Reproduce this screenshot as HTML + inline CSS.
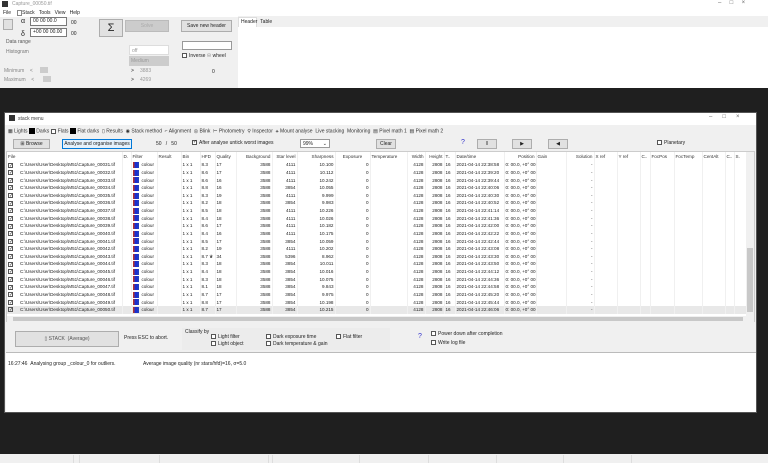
<!DOCTYPE html>
<html><head><meta charset="utf-8"><style>
*{box-sizing:border-box;margin:0;padding:0}
body{width:768px;height:463px;overflow:hidden;background:#1f1f1f;font-family:"Liberation Sans",sans-serif;font-size:5px;color:#222;position:relative}
.a{position:absolute;white-space:nowrap}
.btn{position:absolute;background:#e1e1e1;border:1px solid #adadad;text-align:center;font-size:5px}
.cb{display:inline-block;width:5px;height:5px;border:1px solid #555;background:#fff;vertical-align:middle;margin-right:2px}
.inp{position:absolute;background:#fff;border:1px solid #7a7a7a;font-size:5px;padding-left:2px}
table{border-collapse:collapse;table-layout:fixed;position:absolute;left:7px;top:152px;width:739px}
td{height:7.63px;font-size:4.6px;line-height:7px;white-space:nowrap;overflow:visible;padding:0 1px;border-right:1px solid #f0f0f0}
tr.h td{height:9px;color:#333}
.r{text-align:right}.c{text-align:center}
.sw{display:inline-block;width:6px;height:6px;background:linear-gradient(90deg,#b03030 0 25%,#1a2fd0 25% 75%,#2040c0 75%);vertical-align:middle;margin-right:3px}
.ck{display:inline-block;width:5px;height:5px;border:1px solid #555;font-size:5px;line-height:4px;text-align:center;margin-right:7px;vertical-align:middle}
</style></head><body>
<!-- top app -->
<div class="a" style="left:0;top:0;width:768px;height:88px;background:#fff"></div>
<div class="a" style="left:2px;top:1px;width:6px;height:6px;background:#333"></div>
<div class="a" style="left:12px;top:1px;color:#999">Capture_00050.tif</div>
<div class="a" style="left:718px;top:0;color:#666;font-size:6px">–&nbsp;&nbsp;&nbsp;&nbsp;&nbsp;□&nbsp;&nbsp;&nbsp;&nbsp;&nbsp;×</div>
<div class="a" style="left:3px;top:10px">File &nbsp;&nbsp;&nbsp;&nbsp;&nbsp;&nbsp;&nbsp;Stack &nbsp;&nbsp;Tools &nbsp;&nbsp;View &nbsp;&nbsp;Help</div>
<div class="a" style="left:17px;top:10px;width:5px;height:6px;border:1px solid #888"></div>
<div class="a" style="left:0;top:17px;width:238px;height:71px;background:#f0f0f0"></div>
<div class="a" style="left:238px;top:16px;width:530px;height:11px;background:#f0f0f0"></div>
<div class="a" style="left:238px;top:17px;width:19px;height:10px;background:#fff;border:1px solid #ddd;border-bottom:none"></div>
<div class="a" style="left:241px;top:19px">Header &nbsp;Table</div>
<div class="btn" style="left:3px;top:19px;width:10px;height:11px"></div>
<div class="a" style="left:21px;top:18px;font-size:7px">α</div>
<div class="a" style="left:21px;top:31px;font-size:7px">δ</div>
<div class="inp" style="left:30px;top:17px;width:37px;height:9px;line-height:7px">00 00 00.0</div>
<div class="inp" style="left:30px;top:28px;width:37px;height:9px;line-height:7px">+00 00 00.00</div>
<div class="a" style="left:71px;top:20px">00</div><div class="a" style="left:71px;top:31px">00</div>
<div class="btn" style="left:99px;top:19px;width:24px;height:18px;font-size:11px;line-height:16px">Σ</div>
<div class="btn" style="left:125px;top:20px;width:44px;height:12px;line-height:10px;color:#aaa;background:#ccc;border-color:#bbb">Solve</div>
<div class="btn" style="left:181px;top:20px;width:51px;height:12px;line-height:10px">Save new header</div>
<div class="a" style="left:6px;top:39px;color:#555">Data range</div>
<div class="a" style="left:6px;top:49px;color:#777">Histogram</div>
<div class="a" style="left:129px;top:45px;width:40px;height:10px;background:#fff;border:1px solid #ddd;color:#999;padding:2px">off</div>
<div class="a" style="left:129px;top:56px;width:40px;height:10px;background:#ccc;color:#999;padding:2px">Medium</div>
<div class="a" style="left:182px;top:41px;width:50px;height:9px;background:#fff;border:1px solid #999"></div>
<div class="a" style="left:182px;top:53px"><span class="cb"></span>Inverse ☉ wheel</div>
<div class="a" style="left:4px;top:68px;color:#888">Minimum &nbsp;&nbsp;&nbsp;&lt;</div>
<div class="a" style="left:4px;top:77px;color:#888">Maximum &nbsp;&nbsp;&nbsp;&lt;</div>
<div class="a" style="left:40px;top:67px;width:8px;height:6px;background:#ccc"></div>
<div class="a" style="left:43px;top:76px;width:8px;height:6px;background:#ccc"></div>
<div class="a" style="left:131px;top:68px">&gt;</div><div class="a" style="left:131px;top:77px">&gt;</div>
<div class="a" style="left:140px;top:68px;color:#999">3883</div><div class="a" style="left:140px;top:77px;color:#999">4269</div>
<div class="a" style="left:212px;top:69px">0</div>
<!-- stack window -->
<div class="a" style="left:4px;top:112px;width:753px;height:301px;background:#f0f0f0;border:1px solid #555"></div>
<div class="a" style="left:5px;top:113px;width:751px;height:12px;background:#fff"></div>
<div class="a" style="left:9px;top:115px;width:6px;height:6px;background:#333"></div>
<div class="a" style="left:18px;top:116px;color:#444">stack menu</div>
<div class="a" style="left:709px;top:114px;color:#666;font-size:6px">–&nbsp;&nbsp;&nbsp;&nbsp;&nbsp;&nbsp;□&nbsp;&nbsp;&nbsp;&nbsp;&nbsp;&nbsp;×</div>
<div class="a" style="left:8px;top:128px;color:#333">▦ Lights <span style="display:inline-block;width:6px;height:6px;background:#000;vertical-align:middle"></span> Darks <span class="cb"></span>Flats <span style="display:inline-block;width:6px;height:6px;background:#000;vertical-align:middle"></span> Flat darks &nbsp;▯ Results &nbsp;◉ Stack method &nbsp;⌐ Alignment &nbsp;◎ Blink &nbsp;⊢ Photometry &nbsp;⚲ Inspector &nbsp;⚹ Mount analyse &nbsp;Live stacking &nbsp;Monitoring &nbsp;▤ Pixel math 1 &nbsp;▤ Pixel math 2</div>
<div class="btn" style="left:13px;top:139px;width:37px;height:10px;line-height:8px">⊞ Browse</div>
<div class="btn" style="left:62px;top:139px;width:70px;height:10px;line-height:8px;background:#e5f1fb;border-color:#0078d7">Analyse and organise images</div>
<div class="a" style="left:156px;top:141px">50 &nbsp;&nbsp;/ &nbsp;&nbsp;50</div>
<div class="a" style="left:192px;top:140px"><span class="cb" style="line-height:3px;text-align:center">✓</span>After analyse untick worst images</div>
<div class="a" style="left:300px;top:139px;width:30px;height:9px;background:#fff;border:1px solid #999;padding:1px 2px">99% &nbsp;&nbsp;&nbsp;&nbsp;&nbsp;&nbsp;⌄</div>
<div class="btn" style="left:376px;top:139px;width:20px;height:10px;line-height:8px">Clear</div>
<div class="a" style="left:461px;top:139px;color:#3333cc;font-size:7px">?</div>
<div class="btn" style="left:477px;top:139px;width:20px;height:10px;line-height:8px">‖</div>
<div class="btn" style="left:512px;top:139px;width:20px;height:10px;line-height:8px">▶</div>
<div class="btn" style="left:548px;top:139px;width:20px;height:10px;line-height:8px">◀</div>
<div class="a" style="left:657px;top:140px"><span class="cb"></span>Planetary</div>
<div class="a" style="left:6px;top:151px;width:749px;height:171px;background:#fff;border:1px solid #ccc"></div>
<div class="a" style="left:7px;top:306px;width:739px;height:8px;background:#ececec"></div>
<div class="a" style="left:746px;top:152px;width:8px;height:164px;background:#f0f0f0"></div>
<div class="a" style="left:747px;top:248px;width:6px;height:64px;background:#c8c8c8"></div>
<div class="a" style="left:7px;top:316px;width:747px;height:6px;background:#f0f0f0"></div>
<div class="a" style="left:13px;top:317px;width:730px;height:4px;background:#c8c8c8"></div>
<table>
<colgroup><col style="width:115px"><col style="width:9px"><col style="width:26px"><col style="width:24px"><col style="width:19px"><col style="width:15px"><col style="width:21px"><col style="width:36px"><col style="width:25px"><col style="width:38px"><col style="width:35px"><col style="width:37px"><col style="width:18px"><col style="width:19px"><col style="width:11px"><col style="width:49px"><col style="width:32px"><col style="width:30px"><col style="width:28px"><col style="width:23px"><col style="width:23px"><col style="width:10px"><col style="width:24px"><col style="width:28px"><col style="width:23px"><col style="width:9px"><col style="width:12px"></colgroup>
<tr class="h"><td>File</td><td>D.</td><td>Filter</td><td>Result</td><td>Bin</td><td>HFD</td><td>Quality</td><td class="r">Background</td><td class="r">Star level</td><td class="r">Sharpness</td><td class="c">Exposure</td><td>Temperature</td><td class="r">Width</td><td class="r">Height</td><td>T..</td><td>Date/time</td><td class="r">Position</td><td>Gain</td><td class="r">Solution</td><td>X ref</td><td>Y ref</td><td>C..</td><td>FocPos</td><td>FocTemp</td><td>CentAlt</td><td>C..</td><td>S.</td></tr>
<tr><td><span class="ck">✓</span>C:\Users\User\Desktop\M51\Capture_00031.tif</td><td></td><td><span class="sw"></span>colour</td><td></td><td>1 x 1</td><td>8.3</td><td>17</td><td class="r">3588</td><td class="r">4111</td><td class="r">10.100</td><td class="r">0</td><td></td><td class="r">4128</td><td class="r">2808</td><td>16</td><td>2021-04-14 22:38:58</td><td>0: 00.0, +0° 00</td><td></td><td class="r">-</td><td></td><td></td><td></td><td></td><td></td><td></td><td></td><td></td></tr>
<tr><td><span class="ck">✓</span>C:\Users\User\Desktop\M51\Capture_00032.tif</td><td></td><td><span class="sw"></span>colour</td><td></td><td>1 x 1</td><td>8.6</td><td>17</td><td class="r">3588</td><td class="r">4111</td><td class="r">10.112</td><td class="r">0</td><td></td><td class="r">4128</td><td class="r">2808</td><td>16</td><td>2021-04-14 22:39:20</td><td>0: 00.0, +0° 00</td><td></td><td class="r">-</td><td></td><td></td><td></td><td></td><td></td><td></td><td></td><td></td></tr>
<tr><td><span class="ck">✓</span>C:\Users\User\Desktop\M51\Capture_00033.tif</td><td></td><td><span class="sw"></span>colour</td><td></td><td>1 x 1</td><td>8.6</td><td>16</td><td class="r">3588</td><td class="r">4111</td><td class="r">10.242</td><td class="r">0</td><td></td><td class="r">4128</td><td class="r">2808</td><td>16</td><td>2021-04-14 22:39:44</td><td>0: 00.0, +0° 00</td><td></td><td class="r">-</td><td></td><td></td><td></td><td></td><td></td><td></td><td></td><td></td></tr>
<tr><td><span class="ck">✓</span>C:\Users\User\Desktop\M51\Capture_00034.tif</td><td></td><td><span class="sw"></span>colour</td><td></td><td>1 x 1</td><td>8.8</td><td>16</td><td class="r">3588</td><td class="r">3854</td><td class="r">10.055</td><td class="r">0</td><td></td><td class="r">4128</td><td class="r">2808</td><td>16</td><td>2021-04-14 22:40:06</td><td>0: 00.0, +0° 00</td><td></td><td class="r">-</td><td></td><td></td><td></td><td></td><td></td><td></td><td></td><td></td></tr>
<tr><td><span class="ck">✓</span>C:\Users\User\Desktop\M51\Capture_00035.tif</td><td></td><td><span class="sw"></span>colour</td><td></td><td>1 x 1</td><td>8.3</td><td>19</td><td class="r">3588</td><td class="r">4111</td><td class="r">9.999</td><td class="r">0</td><td></td><td class="r">4128</td><td class="r">2808</td><td>16</td><td>2021-04-14 22:40:30</td><td>0: 00.0, +0° 00</td><td></td><td class="r">-</td><td></td><td></td><td></td><td></td><td></td><td></td><td></td><td></td></tr>
<tr><td><span class="ck">✓</span>C:\Users\User\Desktop\M51\Capture_00036.tif</td><td></td><td><span class="sw"></span>colour</td><td></td><td>1 x 1</td><td>8.2</td><td>18</td><td class="r">3588</td><td class="r">3854</td><td class="r">9.983</td><td class="r">0</td><td></td><td class="r">4128</td><td class="r">2808</td><td>16</td><td>2021-04-14 22:40:52</td><td>0: 00.0, +0° 00</td><td></td><td class="r">-</td><td></td><td></td><td></td><td></td><td></td><td></td><td></td><td></td></tr>
<tr><td><span class="ck">✓</span>C:\Users\User\Desktop\M51\Capture_00037.tif</td><td></td><td><span class="sw"></span>colour</td><td></td><td>1 x 1</td><td>8.5</td><td>18</td><td class="r">3588</td><td class="r">4111</td><td class="r">10.226</td><td class="r">0</td><td></td><td class="r">4128</td><td class="r">2808</td><td>16</td><td>2021-04-14 22:41:14</td><td>0: 00.0, +0° 00</td><td></td><td class="r">-</td><td></td><td></td><td></td><td></td><td></td><td></td><td></td><td></td></tr>
<tr><td><span class="ck">✓</span>C:\Users\User\Desktop\M51\Capture_00038.tif</td><td></td><td><span class="sw"></span>colour</td><td></td><td>1 x 1</td><td>8.4</td><td>18</td><td class="r">3588</td><td class="r">4111</td><td class="r">10.026</td><td class="r">0</td><td></td><td class="r">4128</td><td class="r">2808</td><td>16</td><td>2021-04-14 22:41:36</td><td>0: 00.0, +0° 00</td><td></td><td class="r">-</td><td></td><td></td><td></td><td></td><td></td><td></td><td></td><td></td></tr>
<tr><td><span class="ck">✓</span>C:\Users\User\Desktop\M51\Capture_00039.tif</td><td></td><td><span class="sw"></span>colour</td><td></td><td>1 x 1</td><td>8.6</td><td>17</td><td class="r">3588</td><td class="r">4111</td><td class="r">10.182</td><td class="r">0</td><td></td><td class="r">4128</td><td class="r">2808</td><td>16</td><td>2021-04-14 22:42:00</td><td>0: 00.0, +0° 00</td><td></td><td class="r">-</td><td></td><td></td><td></td><td></td><td></td><td></td><td></td><td></td></tr>
<tr><td><span class="ck">✓</span>C:\Users\User\Desktop\M51\Capture_00040.tif</td><td></td><td><span class="sw"></span>colour</td><td></td><td>1 x 1</td><td>8.4</td><td>16</td><td class="r">3588</td><td class="r">4111</td><td class="r">10.175</td><td class="r">0</td><td></td><td class="r">4128</td><td class="r">2808</td><td>16</td><td>2021-04-14 22:42:22</td><td>0: 00.0, +0° 00</td><td></td><td class="r">-</td><td></td><td></td><td></td><td></td><td></td><td></td><td></td><td></td></tr>
<tr><td><span class="ck">✓</span>C:\Users\User\Desktop\M51\Capture_00041.tif</td><td></td><td><span class="sw"></span>colour</td><td></td><td>1 x 1</td><td>8.5</td><td>17</td><td class="r">3588</td><td class="r">3854</td><td class="r">10.059</td><td class="r">0</td><td></td><td class="r">4128</td><td class="r">2808</td><td>16</td><td>2021-04-14 22:42:44</td><td>0: 00.0, +0° 00</td><td></td><td class="r">-</td><td></td><td></td><td></td><td></td><td></td><td></td><td></td><td></td></tr>
<tr><td><span class="ck">✓</span>C:\Users\User\Desktop\M51\Capture_00042.tif</td><td></td><td><span class="sw"></span>colour</td><td></td><td>1 x 1</td><td>8.2</td><td>19</td><td class="r">3588</td><td class="r">4111</td><td class="r">10.202</td><td class="r">0</td><td></td><td class="r">4128</td><td class="r">2808</td><td>16</td><td>2021-04-14 22:43:08</td><td>0: 00.0, +0° 00</td><td></td><td class="r">-</td><td></td><td></td><td></td><td></td><td></td><td></td><td></td><td></td></tr>
<tr><td><span class="ck">✓</span>C:\Users\User\Desktop\M51\Capture_00043.tif</td><td></td><td><span class="sw"></span>colour</td><td></td><td>1 x 1</td><td>8.7 ♛</td><td>34</td><td class="r">3588</td><td class="r">5396</td><td class="r">8.962</td><td class="r">0</td><td></td><td class="r">4128</td><td class="r">2808</td><td>16</td><td>2021-04-14 22:43:30</td><td>0: 00.0, +0° 00</td><td></td><td class="r">-</td><td></td><td></td><td></td><td></td><td></td><td></td><td></td><td></td></tr>
<tr><td><span class="ck">✓</span>C:\Users\User\Desktop\M51\Capture_00044.tif</td><td></td><td><span class="sw"></span>colour</td><td></td><td>1 x 1</td><td>8.3</td><td>18</td><td class="r">3588</td><td class="r">3854</td><td class="r">10.011</td><td class="r">0</td><td></td><td class="r">4128</td><td class="r">2808</td><td>16</td><td>2021-04-14 22:43:50</td><td>0: 00.0, +0° 00</td><td></td><td class="r">-</td><td></td><td></td><td></td><td></td><td></td><td></td><td></td><td></td></tr>
<tr><td><span class="ck">✓</span>C:\Users\User\Desktop\M51\Capture_00045.tif</td><td></td><td><span class="sw"></span>colour</td><td></td><td>1 x 1</td><td>8.4</td><td>18</td><td class="r">3588</td><td class="r">3854</td><td class="r">10.016</td><td class="r">0</td><td></td><td class="r">4128</td><td class="r">2808</td><td>16</td><td>2021-04-14 22:44:12</td><td>0: 00.0, +0° 00</td><td></td><td class="r">-</td><td></td><td></td><td></td><td></td><td></td><td></td><td></td><td></td></tr>
<tr><td><span class="ck">✓</span>C:\Users\User\Desktop\M51\Capture_00046.tif</td><td></td><td><span class="sw"></span>colour</td><td></td><td>1 x 1</td><td>8.3</td><td>18</td><td class="r">3588</td><td class="r">3854</td><td class="r">10.075</td><td class="r">0</td><td></td><td class="r">4128</td><td class="r">2808</td><td>16</td><td>2021-04-14 22:44:36</td><td>0: 00.0, +0° 00</td><td></td><td class="r">-</td><td></td><td></td><td></td><td></td><td></td><td></td><td></td><td></td></tr>
<tr><td><span class="ck">✓</span>C:\Users\User\Desktop\M51\Capture_00047.tif</td><td></td><td><span class="sw"></span>colour</td><td></td><td>1 x 1</td><td>8.1</td><td>18</td><td class="r">3588</td><td class="r">3854</td><td class="r">9.843</td><td class="r">0</td><td></td><td class="r">4128</td><td class="r">2808</td><td>16</td><td>2021-04-14 22:44:58</td><td>0: 00.0, +0° 00</td><td></td><td class="r">-</td><td></td><td></td><td></td><td></td><td></td><td></td><td></td><td></td></tr>
<tr><td><span class="ck">✓</span>C:\Users\User\Desktop\M51\Capture_00048.tif</td><td></td><td><span class="sw"></span>colour</td><td></td><td>1 x 1</td><td>8.7</td><td>17</td><td class="r">3588</td><td class="r">3854</td><td class="r">9.975</td><td class="r">0</td><td></td><td class="r">4128</td><td class="r">2808</td><td>16</td><td>2021-04-14 22:45:20</td><td>0: 00.0, +0° 00</td><td></td><td class="r">-</td><td></td><td></td><td></td><td></td><td></td><td></td><td></td><td></td></tr>
<tr><td><span class="ck">✓</span>C:\Users\User\Desktop\M51\Capture_00049.tif</td><td></td><td><span class="sw"></span>colour</td><td></td><td>1 x 1</td><td>8.8</td><td>17</td><td class="r">3588</td><td class="r">3854</td><td class="r">10.198</td><td class="r">0</td><td></td><td class="r">4128</td><td class="r">2808</td><td>16</td><td>2021-04-14 22:45:44</td><td>0: 00.0, +0° 00</td><td></td><td class="r">-</td><td></td><td></td><td></td><td></td><td></td><td></td><td></td><td></td></tr>
<tr style="background:#e8e8e8"><td><span class="ck">✓</span>C:\Users\User\Desktop\M51\Capture_00050.tif</td><td></td><td><span class="sw"></span>colour</td><td></td><td>1 x 1</td><td>8.7</td><td>17</td><td class="r">3588</td><td class="r">3854</td><td class="r">10.215</td><td class="r">0</td><td></td><td class="r">4128</td><td class="r">2808</td><td>16</td><td>2021-04-14 22:46:06</td><td>0: 00.0, +0° 00</td><td></td><td class="r">-</td><td></td><td></td><td></td><td></td><td></td><td></td><td></td><td></td></tr>
</table>
<!-- bottom panel -->
<div class="btn" style="left:15px;top:331px;width:104px;height:16px;line-height:14px;color:#555">▯ STACK &nbsp;(Average)</div>
<div class="a" style="left:124px;top:335px">Press ESC to abort.</div>
<div class="a" style="left:182px;top:328px;width:208px;height:22px;background:#ececec"></div>
<div class="a" style="left:185px;top:329px">Classify by</div>
<div class="a" style="left:211px;top:334px"><span class="cb"></span>Light filter</div>
<div class="a" style="left:211px;top:341px"><span class="cb"></span>Light object</div>
<div class="a" style="left:266px;top:334px"><span class="cb"></span>Dark exposure time</div>
<div class="a" style="left:266px;top:341px"><span class="cb"></span>Dark temperature &amp; gain</div>
<div class="a" style="left:336px;top:334px"><span class="cb"></span>Flat filter</div>
<div class="a" style="left:418px;top:333px;color:#3333cc;font-size:7px">?</div>
<div class="a" style="left:431px;top:331px"><span class="cb"></span>Power down after completion</div>
<div class="a" style="left:431px;top:340px"><span class="cb"></span>Write log file</div>
<div class="a" style="left:6px;top:352px;width:750px;height:60px;background:#fff;border-top:1px solid #bbb"></div>
<div class="a" style="left:8px;top:361px">16:27:46 &nbsp;Analysing group _colour_0 for outliers.</div>
<div class="a" style="left:143px;top:361px">Average image quality (nr stars/hfd)=16, σ=5.0</div>
<!-- status bar -->
<div class="a" style="left:0;top:454px;width:768px;height:9px;background:#f0f0f0"></div>
<div class="a" style="left:73px;top:455px;width:1px;height:8px;background:#ddd"></div>
<div class="a" style="left:79px;top:455px;width:1px;height:8px;background:#ddd"></div>
<div class="a" style="left:159px;top:455px;width:1px;height:8px;background:#ddd"></div>
<div class="a" style="left:268px;top:455px;width:1px;height:8px;background:#ddd"></div>
<div class="a" style="left:272px;top:455px;width:1px;height:8px;background:#ddd"></div>
<div class="a" style="left:359px;top:455px;width:1px;height:8px;background:#ddd"></div>
<div class="a" style="left:428px;top:455px;width:1px;height:8px;background:#ddd"></div>
<div class="a" style="left:496px;top:455px;width:1px;height:8px;background:#ddd"></div>
<div class="a" style="left:563px;top:455px;width:1px;height:8px;background:#ddd"></div>
<div class="a" style="left:631px;top:455px;width:1px;height:8px;background:#ddd"></div>
</body></html>
